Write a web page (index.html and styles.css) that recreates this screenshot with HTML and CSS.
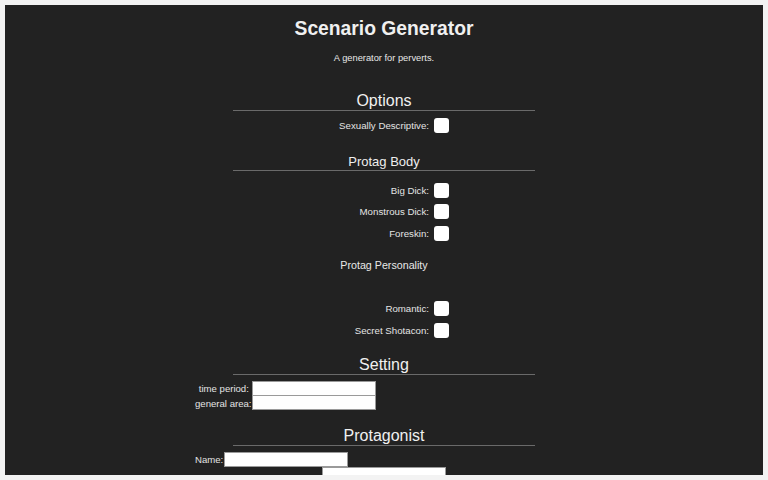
FILE: index.html
```html
<!DOCTYPE html>
<html>
<head>
<meta charset="utf-8">
<title>Scenario Generator</title>
<link rel="stylesheet" href="styles.css">
</head>
<body>
<div class="page">
  <h1 class="title">Scenario Generator</h1>
  <p class="subtitle">A generator for perverts.</p>

  <h2 class="section-head">Options</h2>
  <div class="checks checks-tight">
    <label class="check-row"><span class="check-label">Sexually Descriptive:</span><input type="checkbox" class="box"></label>
  </div>

  <h3 class="sub-head">Protag Body</h3>
  <div class="checks checks-body">
    <label class="check-row"><span class="check-label">Big Dick:</span><input type="checkbox" class="box"></label>
    <label class="check-row"><span class="check-label">Monstrous Dick:</span><input type="checkbox" class="box"></label>
    <label class="check-row"><span class="check-label">Foreskin:</span><input type="checkbox" class="box"></label>
  </div>

  <h4 class="minor-head">Protag Personality</h4>
  <div class="checks checks-personality">
    <label class="check-row"><span class="check-label">Romantic:</span><input type="checkbox" class="box"></label>
    <label class="check-row"><span class="check-label">Secret Shotacon:</span><input type="checkbox" class="box"></label>
  </div>

  <h2 class="section-head section-setting">Setting</h2>
  <div class="fields">
    <div class="field-row"><span class="field-label">time period: </span><input type="text" class="text-input"></div>
    <div class="field-row"><span class="field-label">general area:</span><input type="text" class="text-input"></div>
  </div>

  <h2 class="section-head section-protag">Protagonist</h2>
  <div class="name-row"><span class="field-label">Name:</span><input type="text" class="text-input name-input"></div>
  <div class="center-row"><input type="text" class="text-input"></div>
</div>
</body>
</html>
```

FILE: styles.css
```css
html, body {
  margin: 0;
  padding: 0;
}
body {
  background: #f3f3f3;
  padding: 5px;
  font-family: "Liberation Sans", Arial, sans-serif;
}
.page {
  background: #222222;
  color: #eeeeee;
  height: 470px;
  width: 758px;
  overflow: hidden;
  padding-top: 13px;
  box-sizing: border-box;
}
.title {
  margin: 0;
  text-align: center;
  font-size: 19.3px;
  line-height: 22px;
  font-weight: bold;
  color: #f0f0f0;
}
.subtitle {
  margin: 13px 0 0;
  text-align: center;
  font-size: 9.3px;
  line-height: 11px;
  color: #e8e8e8;
}
.section-head {
  width: 302px;
  margin: 28px auto 0;
  text-align: center;
  font-size: 16px;
  line-height: 18px;
  font-weight: normal;
  color: #f0f0f0;
  border-bottom: 1px solid #6a6a6a;
  padding-bottom: 0;
}
.sub-head {
  width: 302px;
  margin: 17px auto 0;
  text-align: center;
  font-size: 13px;
  line-height: 15px;
  font-weight: normal;
  color: #eeeeee;
  border-bottom: 1px solid #6a6a6a;
  padding-bottom: 1px;
}
.minor-head {
  margin: 15px 0 0;
  text-align: center;
  font-size: 10.7px;
  line-height: 12px;
  font-weight: normal;
  color: #e8e8e8;
}
.checks {
  display: flex;
  flex-direction: column;
}
.checks-tight { margin-top: 4px; }
.checks-body { margin-top: 9px; }
.checks-personality { margin-top: 27px; }
.check-row {
  display: grid;
  grid-template-columns: 424px auto;
  align-items: center;
  height: 21.5px;
}
.check-label {
  text-align: right;
  font-size: 9.7px;
  color: #e4e4e4;
}
.box {
  appearance: none;
  -webkit-appearance: none;
  margin: 0 0 0 5px;
  width: 15px;
  height: 15px;
  background: #ffffff;
  border-radius: 3px;
  border: none;
}
.section-setting { margin-top: 15px; }
.fields {
  display: flex;
  flex-direction: column;
  align-items: flex-end;
  width: fit-content;
  margin: 6px 0 0 190px;
}
.field-row {
  display: flex;
  align-items: center;
  white-space: pre;
}
.field-label {
  font-size: 9.6px;
  color: #e4e4e4;
}
.text-input {
  box-sizing: border-box;
  width: 124px;
  height: 15px;
  margin: 0;
  padding: 0 2px;
  border: 1px solid #9a9a9a;
  background: #ffffff;
  font-size: 9px;
}
.field-row + .field-row .text-input { margin-top: -1px; }
.section-protag { margin-top: 17px; }
.name-row {
  display: flex;
  align-items: center;
  margin: 6px 0 0 190px;
}
.name-input { margin-left: 1px; }
.center-row {
  display: flex;
  justify-content: center;
  margin-top: 0;
}
```
